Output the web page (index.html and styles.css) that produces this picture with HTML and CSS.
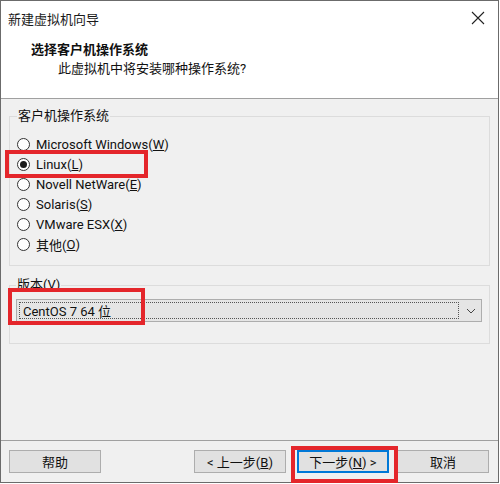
FILE: index.html
```html
<!DOCTYPE html>
<html lang="zh-CN">
<head>
  <meta charset="UTF-8" />
  <meta name="viewport" content="width=device-width, initial-scale=1.0" />
  <title>新建虚拟机向导</title>
  <link rel="stylesheet" href="styles.css">
</head>
<body>

  <div class="window">

    <!-- Title bar + header -->
    <div class="top">
      <div class="titlebar">
        <span class="title">新建虚拟机向导</span>
        <svg class="close" width="14" height="14" viewBox="0 0 14 14">
          <path d="M1 1 L13 13 M13 1 L1 13" stroke="#222" stroke-width="1.1" fill="none" />
        </svg>
      </div>
      <div class="header">
        <h1>选择客户机操作系统</h1>
        <p>此虚拟机中将安装哪种操作系统?</p>
      </div>
    </div>

    <div class="content">

      <!-- Guest OS -->
      <fieldset class="group os-group">
        <legend>客户机操作系统</legend>
        <label class="radio"><span class="dot"></span>Microsoft Windows(<u>W</u>)</label>
        <label class="radio checked"><span class="dot"></span>Linux(<u>L</u>)</label>
        <label class="radio"><span class="dot"></span>Novell NetWare(<u>E</u>)</label>
        <label class="radio"><span class="dot"></span>Solaris(<u>S</u>)</label>
        <label class="radio"><span class="dot"></span>VMware ESX(<u>X</u>)</label>
        <label class="radio"><span class="dot"></span>其他(<u>O</u>)</label>
      </fieldset>

      <!-- Version -->
      <fieldset class="group version-group">
        <legend>版本(V)</legend>
        <div class="select">
          <div class="select-value">CentOS 7 64 位</div>
          <div class="select-arrow">
            <svg width="10" height="6" viewBox="0 0 10 6">
              <path d="M1 1 L5 5 L9 1" stroke="#444" stroke-width="1" fill="none" />
            </svg>
          </div>
        </div>
      </fieldset>

    </div>

    <!-- Buttons -->
    <div class="footer">
      <button class="btn">帮助</button>
      <div class="spacer"></div>
      <button class="btn back">&lt; 上一步(<u>B</u>)</button>
      <button class="btn primary">下一步(<u>N</u>) &gt;</button>
      <button class="btn">取消</button>
    </div>

    <!-- red annotation boxes drawn over the dialog -->
    <div class="mark mark-linux"></div>
    <div class="mark mark-version"></div>
    <div class="mark mark-next"></div>

  </div>

</body>
</html>
```

FILE: styles.css
```css
* {
  margin: 0;
  padding: 0;
  box-sizing: border-box;
  font-family: Roboto, "Noto Sans CJK SC", sans-serif;
}

body {
  width: 500px;
  height: 484px;
  background: #fff;
}

.window {
  width: 499px;
  height: 483px;
  border: 1px solid #6b6b6b;
  background: #f0f0f0;
  display: flex;
  flex-direction: column;
  color: #111;
  font-size: 13px;
  position: relative;
}

/* Top white area */
.top {
  background: #fff;
  height: 98px;
  border-bottom: 1px solid #a0a0a0;
}

.titlebar {
  height: 34px;
  display: flex;
  align-items: center;
  justify-content: space-between;
  padding: 0 13px 0 7px;
}

.title {
  font-size: 13px;
  color: #1a1a1a;
}

.header {
  padding: 6px 0 0 30px;
}

.header h1 {
  font-size: 13px;
  font-weight: bold;
  line-height: 18px;
}

.header p {
  padding-left: 27px;
  font-size: 13px;
  line-height: 19px;
}

/* Group boxes */
.content {
  flex: 1;
  padding: 0 8px;
  border-bottom: 1px solid #a0a0a0;
}

.group {
  border: 1px solid #dcdcdc;
  padding: 0 8px;
}

.group legend {
  font-size: 13px;
  padding: 0 1px;
  line-height: 18px;
}

.os-group {
  margin-top: 8px;
  height: 159px;
  padding-top: 9px;
  padding-left: 7px;
}

.radio {
  display: flex;
  align-items: center;
  height: 20px;
  font-size: 13px;
}

.dot {
  width: 13px;
  height: 13px;
  border: 1px solid #333;
  border-radius: 50%;
  background: #fff;
  margin-right: 6px;
  display: flex;
  align-items: center;
  justify-content: center;
}

.radio.checked .dot::after {
  content: "";
  width: 7px;
  height: 7px;
  border-radius: 50%;
  background: #1a1a1a;
}

.version-group {
  margin-top: 10px;
  height: 68px;
  padding: 5px 7px 0 6px;
}

.select {
  display: flex;
  height: 23px;
  border: 1px solid #adadad;
  background: #e5e5e5;
}

.select-value {
  flex: 1;
  margin: 2px;
  border: 1px dotted #555;
  display: flex;
  align-items: center;
  padding-left: 3px;
  font-size: 13px;
}

.select-arrow {
  width: 20px;
  display: flex;
  align-items: center;
  justify-content: center;
}

/* Footer buttons */
.footer {
  height: 41px;
  display: flex;
  align-items: flex-start;
  padding: 9px 9px 0 8px;
  gap: 8px;
}

.spacer {
  flex: 1;
}

.btn {
  width: 92px;
  height: 23px;
  border: 1px solid #adadad;
  background: #e1e1e1;
  font-size: 13px;
  color: #111;
  font-family: Roboto, "Noto Sans CJK SC", sans-serif;
}

.btn.back {
  margin-right: 3px;
}

.btn.primary {
  border: 2px solid #0078d7;
}

/* Red highlight boxes */
.mark {
  position: absolute;
  border: 4px solid #e4262b;
}

.mark-linux {
  left: 4px;
  top: 149px;
  width: 143px;
  height: 28px;
}

.mark-version {
  left: 7px;
  top: 287px;
  width: 137px;
  height: 37px;
}

.mark-next {
  left: 290px;
  top: 445px;
  width: 107px;
  height: 37px;
}
```
